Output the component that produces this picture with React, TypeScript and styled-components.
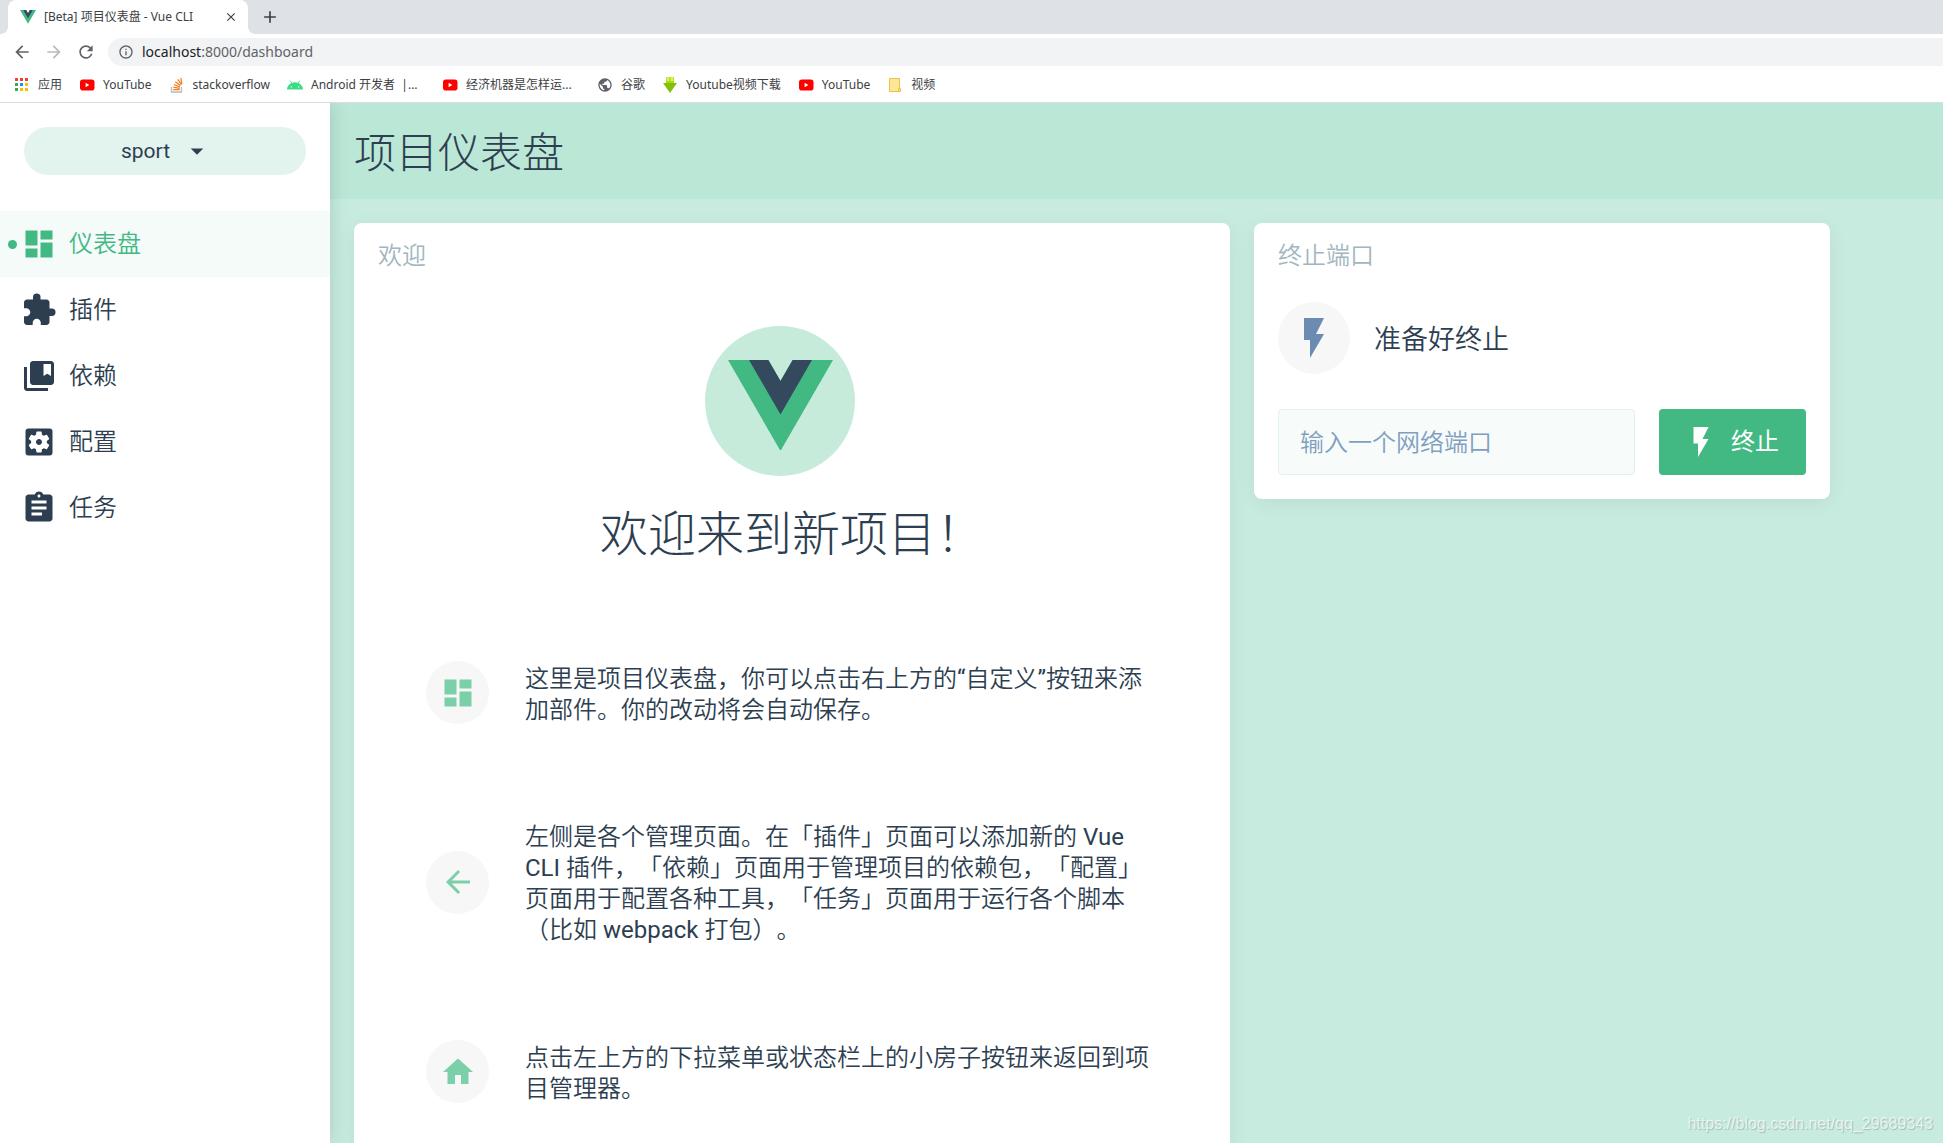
import React from 'react';
import styled, { createGlobalStyle, css } from 'styled-components';
import {
  MdArrowBack,
  MdArrowDropDown,
  MdArrowForward,
  MdAssignment,
  MdClose,
  MdAdd,
  MdCollectionsBookmark,
  MdDashboard,
  MdExtension,
  MdFlashOn,
  MdHome,
  MdInfoOutline,
  MdPublic,
  MdRefresh,
  MdSettingsApplications,
} from 'react-icons/md';
import type { IconType } from 'react-icons';

const color = {
  text: '#2c3e50',
  green: '#42b983',
  mint: '#c7ebdf',
  header: '#bbe7d6',
  chrome: '#dee1e6',
  chromeText: '#3c4043',
  chromeIcon: '#5f6368',
};

const appFont = "Roboto, 'Noto Sans CJK SC DemiLight', 'Noto Sans CJK SC', sans-serif";
const titleFont = "Roboto, 'Noto Sans CJK SC', sans-serif";
const chromeFont = "'Noto Sans', 'Noto Sans CJK SC', sans-serif";

const GlobalStyle = createGlobalStyle`
  *, *::before, *::after { box-sizing: border-box; }
  body {
    margin: 0;
    font-family: ${appFont};
    font-weight: 400;
    color: ${color.text};
    background: #fff;
    text-spacing-trim: space-all;
  }
  h1, h2, p, ul { margin: 0; padding: 0; }
  button, input { font: inherit; color: inherit; }
`;

const Window = styled.div`
  display: flex;
  flex-direction: column;
  height: 100vh;
  overflow: hidden;
`;

/* Browser frame */

const Frame = styled.div`
  flex: none;
  font-family: ${chromeFont};
`;

const TabStrip = styled.div`
  display: flex;
  align-items: flex-end;
  height: 34px;
  padding-left: 8px;
  background: ${color.chrome};
`;

const Tab = styled.div`
  position: relative;
  display: flex;
  align-items: center;
  gap: 8px;
  width: 240px;
  height: 34px;
  padding: 0 10px 0 12px;
  border-radius: 8px 8px 0 0;
  background: #fff;
  font-size: 12px;
  line-height: 20px;
  color: ${color.chromeText};

  &::before,
  &::after {
    content: '';
    position: absolute;
    bottom: 0;
    width: 8px;
    height: 8px;
  }
  &::before {
    right: 100%;
    background: radial-gradient(circle at 0 0, transparent 8px, #fff 8px);
  }
  &::after {
    left: 100%;
    background: radial-gradient(circle at 100% 0, transparent 8px, #fff 8px);
  }
`;

const TabTitle = styled.span`
  flex: 1;
  white-space: nowrap;
`;

const IconButton = styled.button<{ $faded?: boolean }>`
  display: flex;
  align-items: center;
  justify-content: center;
  flex: none;
  padding: 0;
  border: 0;
  background: none;
  color: ${(p) => (p.$faded ? '#bababc' : color.chromeIcon)};
`;

const NewTab = styled(IconButton)`
  width: 28px;
  height: 34px;
  margin-left: 8px;
  color: ${color.chromeText};
`;

const Toolbar = styled.div`
  display: flex;
  align-items: center;
  gap: 12px;
  height: 36px;
  padding-left: 12px;
`;

const AddressBar = styled.div`
  display: flex;
  align-items: center;
  gap: 8px;
  flex: 1;
  height: 28px;
  padding-left: 10px;
  border-radius: 14px 0 0 14px;
  background: #f1f3f4;
  color: ${color.chromeIcon};
`;

const Url = styled.span`
  font-size: 14px;
  line-height: 20px;
`;

const Host = styled.span`
  color: #202124;
`;

const BookmarkBar = styled.nav`
  display: flex;
  align-items: center;
  gap: 17px;
  height: 33px;
  padding: 0 0 2px 14px;
  border-bottom: 1px solid #dadce0;
`;

const Bookmark = styled.a`
  display: flex;
  align-items: center;
  gap: 8px;
  font-size: 12px;
  line-height: 20px;
  color: ${color.chromeText};
  text-decoration: none;
  white-space: pre;
`;

const BookmarkLabel = styled.span<{ $long?: boolean }>`
  ${(p) => p.$long && css`width: 114px;`}
`;

/* Application */

const Shell = styled.div`
  display: flex;
  flex: 1;
  min-height: 0;
  overflow: hidden;
`;

const Sidebar = styled.aside`
  z-index: 1;
  flex: none;
  width: 330px;
  padding-top: 24px;
  background: #fff;
  box-shadow: 0 0 18px rgba(0, 0, 0, 0.15);
`;

const ProjectButton = styled.button`
  display: flex;
  align-items: center;
  justify-content: center;
  gap: 12px;
  width: calc(100% - 48px);
  height: 48px;
  margin: 0 24px 36px;
  padding: 0 0 0 3px;
  border: 0;
  border-radius: 24px;
  background: #e3f4ee;
  font-size: 21px;
  line-height: 31px;
`;

const NavList = styled.ul`
  list-style: none;
`;

const NavLink = styled.a<{ $active?: boolean }>`
  display: flex;
  align-items: center;
  height: 66px;
  padding-left: 8px;
  font-size: 24px;
  line-height: 31px;
  text-decoration: none;
  color: ${(p) => (p.$active ? color.green : color.text)};
  background: ${(p) => (p.$active ? '#f5fbf9' : 'transparent')};

  &::before {
    content: '';
    width: 9px;
    height: 9px;
    margin-right: 4px;
    border-radius: 50%;
    background: ${(p) => (p.$active ? color.green : 'transparent')};
  }

  svg {
    margin-right: 12px;
  }
`;

const Main = styled.main`
  flex: 1;
  min-width: 0;
  overflow: hidden;
  background: ${color.mint};
`;

const PageHeader = styled.header`
  display: flex;
  align-items: center;
  height: 96px;
  padding: 6px 24px 0;
  background: ${color.header};
`;

const PageTitle = styled.h1`
  font-family: ${titleFont};
  font-size: 42px;
  line-height: 60px;
  font-weight: 300;
`;

const Widgets = styled.div`
  display: grid;
  grid-template-columns: minmax(0, 876px) minmax(0, 576px);
  align-items: start;
  gap: 24px;
  padding: 24px;
`;

const Card = styled.section`
  padding: 0 24px 24px;
  border-radius: 8px;
  background: #fff;
  box-shadow: 0 4px 20px rgba(0, 0, 0, 0.06);
`;

const CardTitle = styled.h2`
  padding: 18px 0 17px;
  font-size: 24px;
  line-height: 31px;
  font-weight: 400;
  color: #a3b6c0;
`;

const Welcome = styled.div`
  display: flex;
  flex-direction: column;
  align-items: center;
  padding: 37px 24px 48px 0;
`;

const LogoDisc = styled.div`
  display: flex;
  align-items: center;
  justify-content: center;
  width: 150px;
  height: 150px;
  padding-top: 8px;
  border-radius: 50%;
  background: #c6ebdb;
`;

const WelcomeTitle = styled.p`
  padding: 29px 0 48px;
  font-family: ${titleFont};
  font-size: 48px;
  line-height: 60px;
  font-weight: 300;
  font-feature-settings: 'halt';
`;

const Tip = styled.div`
  display: flex;
  align-items: center;
  gap: 36px;
  width: 100%;
  padding: 48px 24px 48px 48px;
  font-size: 24px;
  line-height: 31px;
`;

const Disc = styled.span<{ $size: number; $color: string }>`
  display: flex;
  align-items: center;
  justify-content: center;
  flex: none;
  width: ${(p) => p.$size}px;
  height: ${(p) => p.$size}px;
  border-radius: 50%;
  background: #f7f7f7;
  color: ${(p) => p.$color};
`;

const TipText = styled.p`
  flex: 1;
  margin: 2px 0 -2px;
`;

const Status = styled.div`
  display: flex;
  align-items: center;
  gap: 24px;
  padding: 13px 0 35px;
`;

const StatusText = styled.p`
  padding-top: 4px;
  font-size: 27px;
  line-height: 36px;
`;

const PortForm = styled.form`
  display: flex;
  gap: 24px;
`;

const PortInput = styled.input`
  flex: 1;
  min-width: 0;
  height: 66px;
  padding: 2px 21px 0;
  border: 1px solid #e0f4ec;
  border-radius: 4px;
  background: #f7fbfa;
  font-size: 24px;

  &::placeholder {
    color: #7f9fbf;
    opacity: 1;
  }
`;

const KillButton = styled.button`
  display: flex;
  align-items: center;
  gap: 12px;
  height: 66px;
  padding: 0 27px 0 24px;
  border: 0;
  border-radius: 4px;
  background: ${color.green};
  color: #fff;
  font-family: ${titleFont};
  font-size: 24px;
  line-height: 31px;
`;

const Watermark = styled.div`
  position: absolute;
  right: 10px;
  bottom: 7px;
  z-index: 2;
  font-family: 'Liberation Sans', Arial, sans-serif;
  font-size: 16px;
  line-height: 24px;
  color: rgba(255, 255, 255, 0.7);
  text-shadow: 1px 1px 1px rgba(0, 0, 0, 0.2);
`;

const VueLogo = ({ width }: { width: number }) => (
  <svg width={width} viewBox="0 0 261.76 226.69" aria-hidden="true">
    <path fill="#42b883" d="M161.1 0 130.88 52.35 100.65 0H0l130.88 226.69L261.76 0z" />
    <path fill="#35495e" d="M161.1 0 130.88 52.35 100.65 0H52.35l78.53 136.01L209.4 0z" />
  </svg>
);

const AppsIcon = () => {
  const fills = ['#ea4335', '#ea4335', '#ea4335', '#34a853', '#1a8cff', '#fbbc04', '#34a853', '#fbbc04', '#fbbc04'];
  return (
    <svg width="16" height="16" viewBox="0 0 16 16" aria-hidden="true">
      {fills.map((fill, i) => (
        <rect key={i} x={1 + (i % 3) * 5} y={1 + Math.floor(i / 3) * 5} width="3" height="3" fill={fill} />
      ))}
    </svg>
  );
};

const YouTubeIcon = () => (
  <svg width="16" height="16" viewBox="0 0 16 16" aria-hidden="true">
    <rect x="1" y="2.5" width="14.5" height="11" rx="2.8" fill="#f00" />
    <path fill="#fff" d="M6.6 5.8v4.4L10.4 8z" />
  </svg>
);

const StackIcon = () => (
  <svg width="16" height="16" viewBox="0 0 16 16" fill="none" aria-hidden="true">
    <path stroke="#bcbbbb" strokeWidth="1.3" d="M2.5 10v5h10v-5" />
    <path stroke="#f48024" strokeWidth="1.3" d="M4.2 12.7h6.6M4.3 10.2l6.5 1.1M4.9 7.5l6 2.4M6.3 4.7l5.2 3.8M8.7 2.4l3.8 5.3M11.8 1l1.1 6" />
  </svg>
);

const AndroidIcon = () => (
  <svg width="16" height="16" viewBox="0 0 16 16" aria-hidden="true">
    <path stroke="#3ddc84" strokeWidth="0.9" strokeLinecap="round" d="M3.4 4l1.8 3M12.6 4l-1.8 3" />
    <path fill="#3ddc84" d="M0 12.5a8 7.2 0 0 1 16 0z" />
    <circle cx="4.4" cy="9.9" r="0.7" fill="#fff" />
    <circle cx="11.6" cy="9.9" r="0.7" fill="#fff" />
  </svg>
);

const DownloadIcon = () => (
  <svg width="16" height="16" viewBox="0 0 16 16" aria-hidden="true">
    <path fill="#b5e61d" d="M4 0h1.6v5H4zM6.4 0h3.2v5H6.4zM10.4 0H12v5h-1.6z" />
    <path fill="#a4dc12" d="M4 4h8v3H4z" />
    <path fill="#84c00a" d="M1 6h14l-7 10z" />
  </svg>
);

const FolderIcon = () => (
  <svg width="16" height="16" viewBox="0 0 16 16" aria-hidden="true">
    <path fill="#ffe694" stroke="#e8c34a" d="M2.5 1.5h10v10h1v3h-11z" />
    <path fill="none" stroke="#e8c34a" d="M11.5 14v-2.5h1" />
  </svg>
);

const GlobeIcon = () => <MdPublic size={16} color={color.chromeIcon} />;

const bookmarks: { label: string; icon: React.FC; long?: boolean }[] = [
  { label: '应用', icon: AppsIcon },
  { label: 'YouTube', icon: YouTubeIcon },
  { label: 'stackoverflow', icon: StackIcon },
  { label: 'Android 开发者  |...', icon: AndroidIcon, long: true },
  { label: '经济机器是怎样运...', icon: YouTubeIcon, long: true },
  { label: '谷歌', icon: GlobeIcon },
  { label: 'Youtube视频下载', icon: DownloadIcon },
  { label: 'YouTube', icon: YouTubeIcon },
  { label: '视频', icon: FolderIcon },
];

const navItems: { label: string; icon: IconType; active?: boolean }[] = [
  { label: '仪表盘', icon: MdDashboard, active: true },
  { label: '插件', icon: MdExtension },
  { label: '依赖', icon: MdCollectionsBookmark },
  { label: '配置', icon: MdSettingsApplications },
  { label: '任务', icon: MdAssignment },
];

const tips: { icon: IconType; text: string }[] = [
  {
    icon: MdDashboard,
    text: '这里是项目仪表盘，你可以点击右上方的“自定义”按钮来添加部件。你的改动将会自动保存。',
  },
  {
    icon: MdArrowBack,
    text: '左侧是各个管理页面。在「插件」页面可以添加新的 Vue CLI 插件，「依赖」页面用于管理项目的依赖包，「配置」页面用于配置各种工具，「任务」页面用于运行各个脚本（比如 webpack 打包）。',
  },
  {
    icon: MdHome,
    text: '点击左上方的下拉菜单或状态栏上的小房子按钮来返回到项目管理器。',
  },
];

export default function App() {
  return (
    <Window>
      <GlobalStyle />
      <Frame>
        <TabStrip>
          <Tab>
            <VueLogo width={16} />
            <TabTitle>[Beta] 项目仪表盘 - Vue CLI</TabTitle>
            <IconButton aria-label="Close tab">
              <MdClose size={14} color={color.chromeText} />
            </IconButton>
          </Tab>
          <NewTab aria-label="New tab">
            <MdAdd size={20} />
          </NewTab>
        </TabStrip>
        <Toolbar>
          <IconButton aria-label="Back">
            <MdArrowBack size={20} />
          </IconButton>
          <IconButton aria-label="Forward" $faded>
            <MdArrowForward size={20} />
          </IconButton>
          <IconButton aria-label="Reload">
            <MdRefresh size={20} />
          </IconButton>
          <AddressBar>
            <MdInfoOutline size={16} />
            <Url>
              <Host>localhost</Host>:8000/dashboard
            </Url>
          </AddressBar>
        </Toolbar>
        <BookmarkBar>
          {bookmarks.map(({ label, icon: Icon, long }, i) => (
            <Bookmark key={i} href="#">
              <Icon />
              <BookmarkLabel $long={long}>{label}</BookmarkLabel>
            </Bookmark>
          ))}
        </BookmarkBar>
      </Frame>
      <Shell>
        <Sidebar>
          <ProjectButton>
            sport
            <MdArrowDropDown size={30} />
          </ProjectButton>
          <NavList>
            {navItems.map(({ label, icon: Icon, active }) => (
              <li key={label}>
                <NavLink href="#" $active={active}>
                  <Icon size={36} />
                  {label}
                </NavLink>
              </li>
            ))}
          </NavList>
        </Sidebar>
        <Main>
          <PageHeader>
            <PageTitle>项目仪表盘</PageTitle>
          </PageHeader>
          <Widgets>
            <Card>
              <CardTitle>欢迎</CardTitle>
              <Welcome>
                <LogoDisc>
                  <VueLogo width={105} />
                </LogoDisc>
                <WelcomeTitle>欢迎来到新项目！</WelcomeTitle>
                {tips.map(({ icon: Icon, text }, i) => (
                  <Tip key={i}>
                    <Disc $size={63} $color="#7bcfa9">
                      <Icon size={36} />
                    </Disc>
                    <TipText>{text}</TipText>
                  </Tip>
                ))}
              </Welcome>
            </Card>
            <Card>
              <CardTitle>终止端口</CardTitle>
              <Status>
                <Disc $size={72} $color="#6b8bb0">
                  <MdFlashOn size={48} />
                </Disc>
                <StatusText>准备好终止</StatusText>
              </Status>
              <PortForm onSubmit={(e) => e.preventDefault()}>
                <PortInput aria-label="输入一个网络端口" placeholder="输入一个网络端口" />
                <KillButton type="submit">
                  <MdFlashOn size={36} />
                  终止
                </KillButton>
              </PortForm>
            </Card>
          </Widgets>
        </Main>
      </Shell>
      <Watermark>https://blog.csdn.net/qq_29689343</Watermark>
    </Window>
  );
}
